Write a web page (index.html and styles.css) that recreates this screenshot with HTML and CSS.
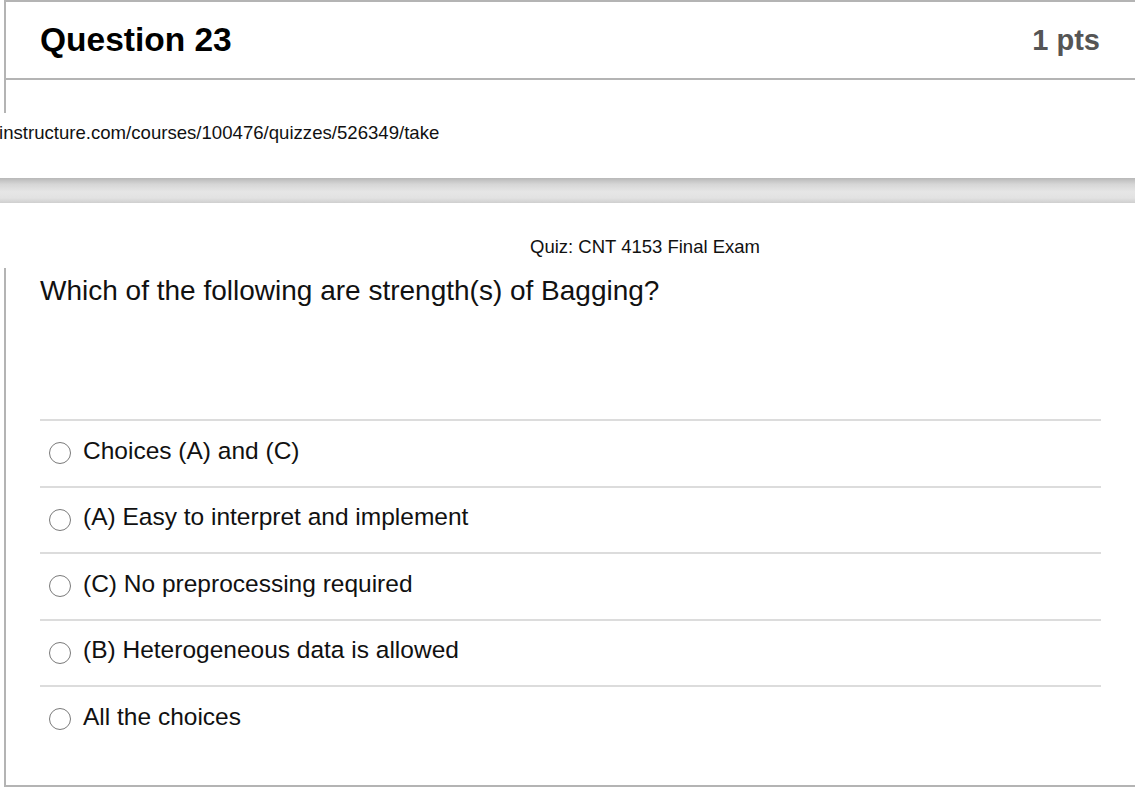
FILE: index.html
```html
<!DOCTYPE html>
<html lang="en">
<head>
  <meta charset="UTF-8" />
  <title>Question 23</title>
  <link rel="stylesheet" href="styles.css">
</head>
<body>
  <div class="question-top">
    <div class="header">
      <div class="title">Question 23</div>
      <div class="points">1 pts</div>
    </div>
  </div>

  <div class="print-url">instructure.com/courses/100476/quizzes/526349/take</div>
  <div class="page-break"></div>
  <div class="print-title">Quiz: CNT 4153 Final Exam</div>

  <div class="question-body">
    <div class="question-text">Which of the following are strength(s) of Bagging?</div>
    <div class="answers">
      <label class="answer"><span class="radio"></span>Choices (A) and (C)</label>
      <label class="answer"><span class="radio"></span>(A) Easy to interpret and implement</label>
      <label class="answer"><span class="radio"></span>(C) No preprocessing required</label>
      <label class="answer"><span class="radio"></span>(B) Heterogeneous data is allowed</label>
      <label class="answer"><span class="radio"></span>All the choices</label>
    </div>
  </div>
</body>
</html>
```

FILE: styles.css
```css
* {
  box-sizing: border-box;
}
body {
  margin: 0;
  font-family: "Liberation Sans", Arial, sans-serif;
  background-color: #fff;
  color: #111;
  overflow: hidden;
}

.question-top {
  margin-left: 4px;
  height: 113px;
  border-left: 2px solid #b4b4b4;
}

.header {
  display: flex;
  justify-content: space-between;
  align-items: center;
  height: 80px;
  padding: 0 35px 0 34px;
  border-top: 2px solid #b4b4b4;
  border-bottom: 2px solid #b4b4b4;
}

.title {
  font-size: 33.5px;
  font-weight: bold;
  color: #000;
}

.points {
  font-size: 29px;
  font-weight: bold;
  color: #555;
}

.print-url {
  height: 65px;
  padding-top: 9px;
  font-size: 18.6px;
  line-height: 22px;
  color: #111;
  text-indent: -1px;
}

.page-break {
  height: 25px;
  background: linear-gradient(to bottom, #b8b8b8 0%, #d6d6d6 25%, #e6e6e6 55%, #e2e2e2 80%, #cfcfcf 100%);
}

.print-title {
  height: 65px;
  padding-top: 33px;
  padding-left: 530px;
  font-size: 18.5px;
  line-height: 22px;
  color: #111;
}

.question-body {
  margin-left: 4px;
  height: 519px;
  padding: 7px 34px 0 34px;
  border-left: 2px solid #b4b4b4;
  border-bottom: 2px solid #b4b4b4;
}

.question-text {
  font-size: 28px;
  line-height: 32px;
  margin-bottom: 112px;
}

.answer {
  display: flex;
  align-items: center;
  height: 66.5px;
  padding-bottom: 5px;
  border-top: 2px solid #dcdcdc;
  font-size: 24.5px;
  cursor: pointer;
}

.radio {
  width: 22px;
  height: 22px;
  margin: 5px 12px 0 9px;
  border: 1.5px solid #7a7a7a;
  border-radius: 50%;
  flex-shrink: 0;
}
```
